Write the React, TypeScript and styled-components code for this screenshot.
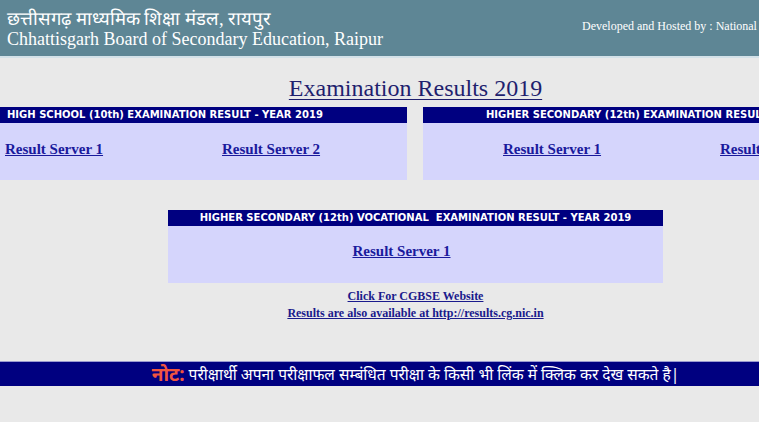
import React from "react";
import styled, { createGlobalStyle } from "styled-components";

const GlobalStyle = createGlobalStyle`
  html, body {
    margin: 0;
    padding: 0;
    background: #e9e9e9;
    overflow: hidden;
  }
`;

const Page = styled.div`
  width: 831px;
  min-height: 422px;
  background: #e9e9e9;
  font-family: "Liberation Serif", "Times New Roman", serif;
`;

const Header = styled.header`
  display: flex;
  align-items: center;
  height: 56px;
  padding-left: 7px;
  background: #5e8695;
  border-bottom: 2px solid #d3e1e8;
  color: #fff;
`;

const Brand = styled.div`
  flex: 0 0 575px;
  display: flex;
  flex-direction: column;
  padding-top: 2px;
`;

const BrandHindi = styled.div`
  font-size: 18.5px;
  line-height: 21px;
`;

const BrandEnglish = styled.div`
  font-size: 18px;
  line-height: 19px;
`;

const Credit = styled.div`
  font-size: 12px;
  white-space: nowrap;
  margin-top: -4px;
`;

const Title = styled.h1`
  margin: 16px 0 0;
  text-align: center;
  font-weight: normal;
  font-size: 24px;
  line-height: 29px;
  color: #1f1f6e;
  text-decoration: underline;
  text-decoration-thickness: 1px;
  text-underline-offset: 3px;
`;

const PanelRow = styled.div`
  display: flex;
  gap: 16px;
  margin-top: 4px;
`;

const Panel = styled.section<{ $width: number }>`
  width: ${(p) => p.$width}px;
  background: #d5d5fc;
  flex: none;
`;

const PanelHead = styled.div<{ $pad?: number; $center?: boolean }>`
  height: 16px;
  line-height: 16px;
  background: #000080;
  color: #fff;
  font-family: "DejaVu Sans", Verdana, sans-serif;
  font-weight: bold;
  font-size: 10px;
  white-space: nowrap;
  overflow: hidden;
  padding-left: ${(p) => p.$pad ?? 0}px;
  text-align: ${(p) => (p.$center ? "center" : "left")};
`;

const LinkGrid = styled.div<{ $pad?: number }>`
  display: grid;
  grid-template-columns: 217px 217px;
  align-items: center;
  height: 53px;
  padding-bottom: 4px;
  padding-left: ${(p) => p.$pad ?? 0}px;
  white-space: nowrap;
`;

const LinkCenter = styled.div`
  height: 51px;
  padding: 0 28px 6px 0;
  display: flex;
  align-items: center;
  justify-content: center;
`;

const ServerLink = styled.a`
  font-size: 15px;
  font-weight: bold;
  color: #1a1a9c;
  text-decoration: underline;
`;

const Middle = styled.div`
  display: flex;
  justify-content: center;
  margin-top: 30px;
`;

const InfoLinks = styled.div`
  display: flex;
  flex-direction: column;
  align-items: center;
  margin-top: 5px;
`;

const InfoLink = styled.a`
  font-size: 12px;
  font-weight: bold;
  line-height: 17px;
  color: #1a1a8c;
  text-decoration: underline;
`;

const NoteBar = styled.div`
  margin-top: 39px;
  height: 24px;
  background: #000080;
  border-top: 1px solid #9a9ad0;
  display: flex;
  align-items: center;
  justify-content: center;
  color: #fff;
  font-family: "Noto Sans", sans-serif;
  font-size: 15.5px;
  white-space: nowrap;
`;

const NoteLabel = styled.span`
  color: #f0553f;
  font-weight: bold;
  font-size: 19px;
  margin-right: 4px;
`;

export default function App() {
  return (
    <Page>
      <GlobalStyle />
      <Header>
        <Brand>
          <BrandHindi>छत्तीसगढ़ माध्यमिक शिक्षा मंडल, रायपुर</BrandHindi>
          <BrandEnglish>Chhattisgarh Board of Secondary Education, Raipur</BrandEnglish>
        </Brand>
        <Credit>Developed and Hosted by : National Informatics Centre</Credit>
      </Header>

      <Title>Examination Results 2019</Title>

      <PanelRow>
        <Panel $width={407}>
          <PanelHead $pad={7}>HIGH SCHOOL (10th) EXAMINATION RESULT - YEAR 2019</PanelHead>
          <LinkGrid $pad={5}>
            <ServerLink href="#">Result Server 1</ServerLink>
            <ServerLink href="#">Result Server 2</ServerLink>
          </LinkGrid>
        </Panel>
        <Panel $width={408}>
          <PanelHead $pad={63}>HIGHER SECONDARY (12th) EXAMINATION RESULT - YEAR 2019</PanelHead>
          <LinkGrid $pad={80}>
            <ServerLink href="#">Result Server 1</ServerLink>
            <ServerLink href="#">Result Server 2</ServerLink>
          </LinkGrid>
        </Panel>
      </PanelRow>

      <Middle>
        <Panel $width={495}>
          <PanelHead $center>
            HIGHER SECONDARY (12th) VOCATIONAL&nbsp; EXAMINATION RESULT - YEAR 2019
          </PanelHead>
          <LinkCenter>
            <ServerLink href="#">Result Server 1</ServerLink>
          </LinkCenter>
        </Panel>
      </Middle>

      <InfoLinks>
        <InfoLink href="#">Click For CGBSE Website</InfoLink>
        <InfoLink href="#">Results are also available at http://results.cg.nic.in</InfoLink>
      </InfoLinks>

      <NoteBar>
        <NoteLabel>नोट:</NoteLabel>
        परीक्षार्थी अपना परीक्षाफल सम्बंधित परीक्षा के किसी भी लिंक में क्लिक कर देख सकते है|
      </NoteBar>
    </Page>
  );
}
